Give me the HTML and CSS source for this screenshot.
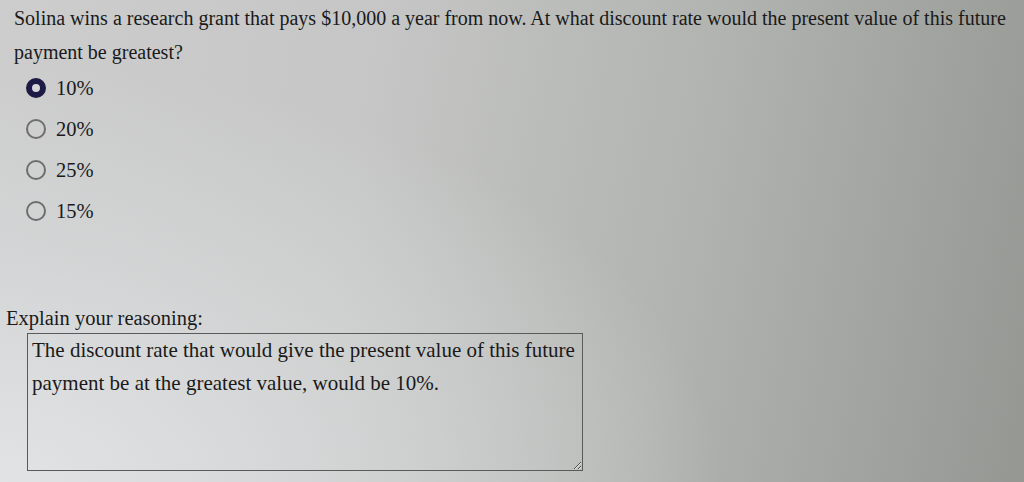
FILE: index.html
```html
<!DOCTYPE html>
<html>
<head>
<meta charset="utf-8">
<link rel="stylesheet" href="styles.css">
</head>
<body>
<div class="page">
  <p class="question">Solina wins a research grant that pays $10,000 a year from now. At what discount rate would the present value of this future<br>payment be greatest?</p>
  <div class="options">
    <label class="opt"><input type="radio" name="r" checked><span>10%</span></label>
    <label class="opt"><input type="radio" name="r"><span>20%</span></label>
    <label class="opt"><input type="radio" name="r"><span>25%</span></label>
    <label class="opt"><input type="radio" name="r"><span>15%</span></label>
  </div>
  <div class="explain">Explain your reasoning:</div>
  <textarea class="answer">The discount rate that would give the present value of this future payment be at the greatest value, would be 10%.</textarea>
</div>
</body>
</html>
```
FILE: styles.css
```css
html, body {
  margin: 0;
  height: 100%;
}
body {
  width: 1024px;
  height: 482px;
  overflow: hidden;
  font-family: "Liberation Serif", "Times New Roman", serif;
  color: #1a1a1a;
  background:
    radial-gradient(ellipse 900px 520px at 0% 100%, rgba(226,228,230,0.95) 0%, rgba(216,218,219,0.6) 45%, rgba(200,200,200,0) 80%),
    linear-gradient(100deg, #cdcdcd 0%, #c5c6c5 35%, #b2b4b1 65%, #959793 100%);
}
.page {
  padding: 1px 0 0 14px;
}
.question {
  margin: 0;
  font-size: 20px;
  line-height: 34px;
  white-space: nowrap;
}
.options {
  display: flex;
  flex-direction: column;
  gap: 15px;
  margin-top: 6px;
  padding-left: 12px;
}
.opt {
  display: flex;
  align-items: center;
  gap: 10px;
  font-size: 20.5px;
  height: 26px;
}
.opt input {
  appearance: none;
  -webkit-appearance: none;
  margin: 0;
  width: 20px;
  height: 20px;
  border-radius: 50%;
  border: 2px solid #6e6e6e;
  background: transparent;
  box-sizing: border-box;
}
.opt input:checked {
  border: 6px solid #1d1a45;
  background: #d6d6d8;
}
.explain {
  margin: 82px 0 0 -8px;
  font-size: 20.5px;
  line-height: 24px;
}
.answer {
  display: block;
  margin: 3px 0 0 13px;
  width: 556px;
  height: 138px;
  box-sizing: border-box;
  border: 1px solid #5a5a5a;
  background: transparent;
  font-family: "Liberation Serif", "Times New Roman", serif;
  font-size: 21px;
  line-height: 33px;
  color: #1a1a1a;
  padding: 0 4px;
  resize: vertical;
}
```
